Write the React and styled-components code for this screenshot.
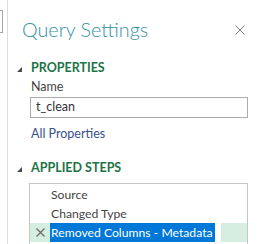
import React from "react";
import styled, { createGlobalStyle } from "styled-components";

const Global = createGlobalStyle`
  html, body { margin: 0; padding: 0; background: #fff; }
  body { font-family: Lato, "Open Sans", "Liberation Sans", sans-serif; }
`;

const Page = styled.div`
  display: flex;
  width: 264px;
  height: 244px;
  overflow: hidden;
  background: #fff;
`;

const LeftStrip = styled.div`
  width: 7px;
  flex: none;
`;

const StubBox = styled.div`
  margin-top: 10px;
  width: 2px;
  height: 21px;
  border: 1px solid #a8a8a8;
  border-left: none;
`;

const Panel = styled.div`
  flex: 1;
  border-left: 1px solid #dcdcdc;
  padding: 0 16px 0 9px;
  display: flex;
  flex-direction: column;
`;

const TitleRow = styled.div`
  display: flex;
  justify-content: space-between;
  margin-top: 15px;
  height: 28px;
`;

const Title = styled.div`
  margin-left: 5px;
  font-size: 19.8px;
  line-height: 28px;
  font-weight: 300;
  color: #3390a3;
`;

const CloseIcon = styled.svg`
  width: 10px;
  height: 10px;
  margin-top: 10px;
  margin-right: 3px;
  flex: none;
`;

const SectionHeader = styled.div`
  display: flex;
  align-items: center;
  gap: 9px;
  margin-top: ${(p) => p.$mt}px;
  height: 16px;
  font-size: 12.5px;
  line-height: 16px;
  font-weight: 700;
  color: #217346;
`;

const Triangle = styled.span`
  width: 0;
  height: 0;
  margin-top: 2px;
  border-left: 5px solid transparent;
  border-bottom: 5px solid #4a4a4a;
`;

const Label = styled.div`
  margin: 3px 0 0 14px;
  font-size: 12.5px;
  line-height: 16px;
  color: #444;
`;

const TextBox = styled.div`
  margin: 2px 0 0 13px;
  height: 21px;
  box-sizing: border-box;
  border: 1px solid #ababab;
  padding-left: 5px;
  font-size: 12.5px;
  line-height: 17px;
  color: #333;
`;

const Link = styled.div`
  margin: 8px 0 0 14px;
  font-size: 12.5px;
  line-height: 16px;
  color: #3b4f8c;
`;

const StepsBox = styled.div`
  margin: 7px 0 0 12px;
  flex: 1;
  border: 1px solid #c6c6c6;
  border-bottom: none;
  padding-top: 1px;
  display: flex;
  flex-direction: column;
`;

const StepRow = styled.div`
  display: grid;
  grid-template-columns: 20px 1fr 26px;
  height: 19px;
  font-size: 12.2px;
  line-height: 19px;
  color: #444;
`;

const IconCell = styled.div`
  display: flex;
  align-items: center;
  justify-content: center;
  background: ${(p) => (p.$active ? "#d5eedf" : "transparent")};
`;

const NameCell = styled.div`
  white-space: nowrap;
  overflow: hidden;
`;

const StepText = styled.span`
  display: inline-block;
  padding: 0 2px 0 1px;
  background: ${(p) => (p.$selected ? "#0078d7" : "transparent")};
  color: ${(p) => (p.$selected ? "#fff" : "#444")};
`;

const EndCell = styled.div`
  background: ${(p) => (p.$active ? "#d5eedf" : "transparent")};
`;

const steps = [
  { name: "Source" },
  { name: "Changed Type" },
  { name: "Removed Columns - Metadata", selected: true },
];

export default function App() {
  return (
    <>
      <Global />
      <Page>
        <LeftStrip>
          <StubBox />
        </LeftStrip>
        <Panel>
          <TitleRow>
            <Title>Query Settings</Title>
            <CloseIcon viewBox="0 0 10 10">
              <path d="M0.5 0.5 L9.5 9.5 M9.5 0.5 L0.5 9.5" stroke="#808080" strokeWidth="1" />
            </CloseIcon>
          </TitleRow>
          <SectionHeader $mt={17}>
            <Triangle />
            PROPERTIES
          </SectionHeader>
          <Label>Name</Label>
          <TextBox>t_clean</TextBox>
          <Link>All Properties</Link>
          <SectionHeader $mt={18}>
            <Triangle />
            APPLIED STEPS
          </SectionHeader>
          <StepsBox>
            {steps.map((s) => (
              <StepRow key={s.name}>
                <IconCell $active={s.selected}>
                  {s.selected && (
                    <svg width="9" height="9" viewBox="0 0 9 9">
                      <path d="M0.5 0.5 L8.5 8.5 M8.5 0.5 L0.5 8.5" stroke="#6a6a6a" strokeWidth="1.2" />
                    </svg>
                  )}
                </IconCell>
                <NameCell>
                  <StepText $selected={s.selected}>{s.name}</StepText>
                </NameCell>
                <EndCell $active={s.selected} />
              </StepRow>
            ))}
          </StepsBox>
        </Panel>
      </Page>
    </>
  );
}
